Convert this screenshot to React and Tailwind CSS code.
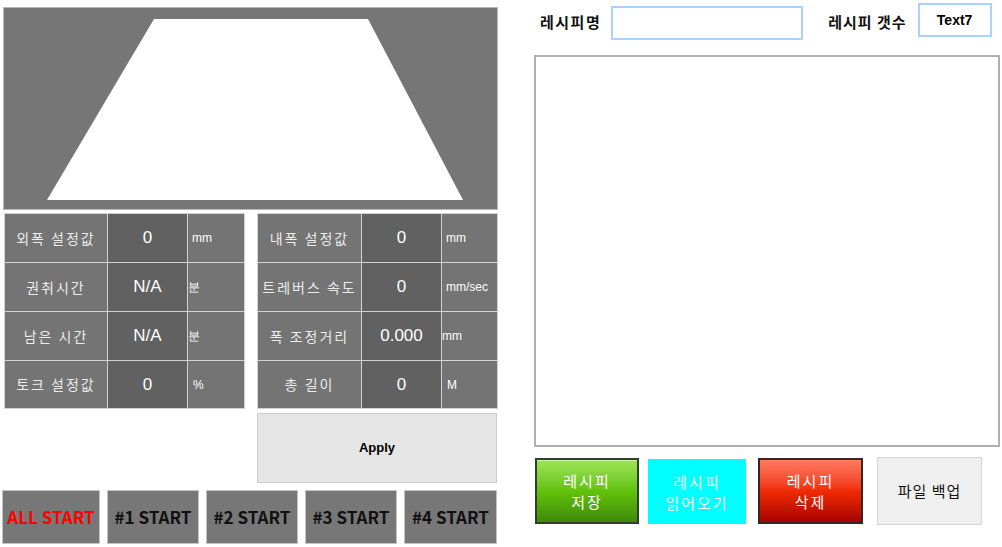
const KR = { fontFamily: '"Noto Sans CJK KR", "Noto Sans", sans-serif' };

const leftRows = [
  { label: '외폭 설정값', value: '0', unit: 'mm', unitPad: 'pl-[4px]' },
  { label: '권취시간', value: 'N/A', unit: '분', unitPad: 'pl-0' },
  { label: '남은 시간', value: 'N/A', unit: '분', unitPad: 'pl-0' },
  { label: '토크 설정값', value: '0', unit: '%', unitPad: 'pl-[5px]' },
];

const rightRows = [
  { label: '내폭 설정값', value: '0', unit: 'mm', unitPad: 'pl-[4px]' },
  { label: '트레버스 속도', value: '0', unit: 'mm/sec', unitPad: 'pl-[4px]' },
  { label: '폭 조정거리', value: '0.000', unit: 'mm', unitPad: 'pl-0' },
  { label: '총 길이', value: '0', unit: 'M', unitPad: 'pl-[5px]' },
];

function ParamTable({ rows, cols }) {
  return (
    <div className={`grid ${cols} grid-rows-[48px_48px_48px_47px] gap-px p-px bg-[#d2d2d2]`}>
      {rows.map((r) => (
        <Row key={r.label} {...r} />
      ))}
    </div>
  );
}

function Row({ label, value, unit, unitPad }) {
  return (
    <>
      <div className="bg-[#747474] flex items-center justify-center text-[14px] text-[#ececec] tracking-[2px] whitespace-nowrap" style={KR}>
        {label}
      </div>
      <div className="bg-[#616161] flex items-center justify-center text-[17px] text-white font-['Liberation_Sans',sans-serif]">
        {value}
      </div>
      <div className={`bg-[#747474] flex items-center text-[12px] text-white font-['Liberation_Sans',sans-serif] ${unitPad}`}>
        {unit}
      </div>
    </>
  );
}

function StartButton({ label, width, red }) {
  return (
    <button
      className={`h-[54px] ${width} bg-[#777777] border border-[#c4c4c4] flex items-center justify-center text-[17px] font-bold whitespace-nowrap ${red ? 'text-[#ff0000]' : 'text-[#111111]'}`}
      style={KR}
    >
      {label}
    </button>
  );
}

export default function App() {
  return (
    <div className="w-[1002px] h-[547px] bg-white flex overflow-hidden">
      {/* left side */}
      <div className="w-[534px] flex flex-col pl-[3px] pt-[7px]">
        <div className="w-[495px] h-[203px] bg-[#767676] border border-[#b8b8b8]">
          <svg width="493" height="201" viewBox="0 0 493 201" className="block">
            <polygon points="150,11 364,11 459,192 43,192" fill="#ffffff" />
          </svg>
        </div>

        <div className="flex mt-[3px]">
          <div className="ml-[1px] w-[241px]">
            <ParamTable rows={leftRows} cols="grid-cols-[102px_79px_56px]" />
          </div>
          <div className="ml-[12px] w-[241px] flex flex-col">
            <ParamTable rows={rightRows} cols="grid-cols-[103px_79px_55px]" />
            <button className="mt-[4px] h-[70px] w-[240px] bg-[#e5e5e5] border border-[#cccccc] text-[13px] font-bold text-black font-['Liberation_Sans',sans-serif]">
              Apply
            </button>
          </div>
        </div>

        <div className="flex gap-[7px] mt-auto mb-[3px] -ml-[1px]">
          <StartButton label="ALL START" width="w-[98px]" red />
          <StartButton label="#1 START" width="w-[92px]" />
          <StartButton label="#2 START" width="w-[92px]" />
          <StartButton label="#3 START" width="w-[92px]" />
          <StartButton label="#4 START" width="w-[93px]" />
        </div>
      </div>

      {/* right side */}
      <div className="flex-1 flex flex-col">
        <div className="flex items-start h-[50px]">
          <span className="mt-[11px] ml-[6px] text-[15px] font-bold text-[#111111] tracking-[1.5px]" style={KR}>
            레시피명
          </span>
          <div className="mt-[6px] ml-[10px] w-[192px] h-[34px] border-2 border-[#a9d2ff] bg-white" />
          <span className="mt-[11px] ml-[25px] text-[15px] font-bold text-[#111111] tracking-[1px]" style={KR}>
            레시피 갯수
          </span>
          <div className="mt-[3px] ml-[11px] w-[74px] h-[34px] border-2 border-[#a9d2ff] bg-white flex items-center justify-center text-[14px] font-bold text-black font-['Liberation_Sans',sans-serif]">
            Text7
          </div>
        </div>

        <div className="mt-[5px] w-[466px] h-[392px] border-2 border-[#b0b0b0] bg-white" />

        <div className="flex items-start mt-[10px]">
          <button
            className="mt-[1px] ml-[1px] w-[104px] h-[66px] border-2 border-[#2f3f2a] bg-gradient-to-b from-[#9de454] via-[#62c20a] to-[#3f8a0a] text-white text-[15px] leading-[21px] tracking-[2px] flex flex-col items-center justify-center shadow-[inset_0_1px_0_rgba(255,255,255,0.5)]"
            style={KR}
          >
            <span>레시피</span>
            <span>저장</span>
          </button>
          <button
            className="mt-[2px] ml-[9px] w-[98px] h-[65px] bg-[#00ffff] text-white text-[15px] leading-[21px] tracking-[2px] flex flex-col items-center justify-center"
            style={KR}
          >
            <span>레시피</span>
            <span>읽어오기</span>
          </button>
          <button
            className="mt-[1px] ml-[12px] w-[105px] h-[66px] border-2 border-[#3a2424] bg-gradient-to-b from-[#ff7a60] via-[#f02a00] to-[#a80000] text-white text-[15px] leading-[21px] tracking-[2px] flex flex-col items-center justify-center"
            style={KR}
          >
            <span>레시피</span>
            <span>삭제</span>
          </button>
          <button
            className="ml-[14px] w-[105px] h-[68px] bg-[#efefef] border border-[#d4d4d4] text-[15px] tracking-[1px] text-[#111111] flex items-center justify-center"
            style={KR}
          >
            파일 백업
          </button>
        </div>
      </div>
    </div>
  );
}
